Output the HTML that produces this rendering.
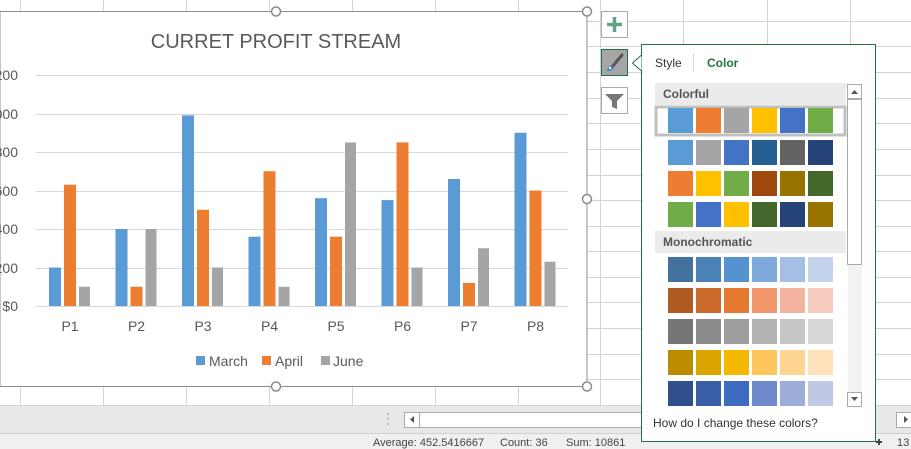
<!DOCTYPE html>
<html><head><meta charset="utf-8"><style>
body{margin:0;width:911px;height:449px;overflow:hidden;background:#fff;font-family:"Liberation Sans",sans-serif;position:relative}
.a{position:absolute}
.sw{position:absolute;width:25px;height:25px}
</style></head><body>
<svg class="a" style="left:0;top:0" width="911" height="449">
<g stroke="#d4d4d4" stroke-width="1">
<line x1="0" y1="21.5" x2="911" y2="21.5"/><line x1="0" y1="46.5" x2="911" y2="46.5"/><line x1="0" y1="72.5" x2="911" y2="72.5"/><line x1="0" y1="98.5" x2="911" y2="98.5"/><line x1="0" y1="123.5" x2="911" y2="123.5"/><line x1="0" y1="149.5" x2="911" y2="149.5"/><line x1="0" y1="175.5" x2="911" y2="175.5"/><line x1="0" y1="200.5" x2="911" y2="200.5"/><line x1="0" y1="226.5" x2="911" y2="226.5"/><line x1="0" y1="251.5" x2="911" y2="251.5"/><line x1="0" y1="277.5" x2="911" y2="277.5"/><line x1="0" y1="302.5" x2="911" y2="302.5"/><line x1="0" y1="328.5" x2="911" y2="328.5"/><line x1="0" y1="354.5" x2="911" y2="354.5"/><line x1="0" y1="379.5" x2="911" y2="379.5"/><line x1="0" y1="405.5" x2="911" y2="405.5"/>
<line x1="20.5" y1="0" x2="20.5" y2="405"/><line x1="103.5" y1="0" x2="103.5" y2="405"/><line x1="186.5" y1="0" x2="186.5" y2="405"/><line x1="269.5" y1="0" x2="269.5" y2="405"/><line x1="352.5" y1="0" x2="352.5" y2="405"/><line x1="435.5" y1="0" x2="435.5" y2="405"/><line x1="518.5" y1="0" x2="518.5" y2="405"/><line x1="600.5" y1="0" x2="600.5" y2="405"/><line x1="683.5" y1="0" x2="683.5" y2="405"/><line x1="767.5" y1="0" x2="767.5" y2="405"/><line x1="850.5" y1="0" x2="850.5" y2="405"/>
</g>
<rect x="0" y="11.5" width="587" height="375" fill="#fff" stroke="#8c8c8c"/>
<g fill="#fff" stroke="#8c8c8c" stroke-width="1.5"><circle cx="276" cy="11.5" r="4.5"/><circle cx="587" cy="11.5" r="4.5"/><circle cx="587" cy="199" r="4.5"/><circle cx="587" cy="386.5" r="4.5"/><circle cx="276" cy="386.5" r="4.5"/></g>
<g stroke="#d9d9d9"><line x1="36" y1="75.5" x2="568" y2="75.5"/><line x1="36" y1="114.5" x2="568" y2="114.5"/><line x1="36" y1="152.5" x2="568" y2="152.5"/><line x1="36" y1="191.5" x2="568" y2="191.5"/><line x1="36" y1="229.5" x2="568" y2="229.5"/><line x1="36" y1="268.5" x2="568" y2="268.5"/><line x1="36" y1="306.5" x2="568" y2="306.5"/></g>
<text x="276" y="48" font-size="20" fill="#595959" text-anchor="middle" font-family="Liberation Sans">CURRET PROFIT STREAM</text>
<g font-size="14" fill="#595959" text-anchor="end" font-family="Liberation Sans"><text x="18" y="80">200</text><text x="18" y="119">000</text><text x="18" y="157">800</text><text x="18" y="196">600</text><text x="18" y="234">400</text><text x="18" y="273">200</text><text x="18" y="311">$0</text></g>
<g font-size="14" fill="#595959" text-anchor="middle" font-family="Liberation Sans"><text x="70" y="331">P1</text><text x="136.5" y="331">P2</text><text x="203" y="331">P3</text><text x="269.5" y="331">P4</text><text x="336" y="331">P5</text><text x="402.5" y="331">P6</text><text x="469" y="331">P7</text><text x="535.5" y="331">P8</text></g>
<g fill="#5b9bd5"><rect x="49" y="267.5" width="12" height="38.5"/><rect x="115.5" y="229" width="12" height="77"/><rect x="182" y="115.4" width="12" height="190.6"/><rect x="248.5" y="236.7" width="12" height="69.3"/><rect x="315" y="198.2" width="12" height="107.8"/><rect x="381.5" y="200.1" width="12" height="105.9"/><rect x="448" y="179" width="12" height="127"/><rect x="514.5" y="132.75" width="12" height="173.25"/></g>
<g fill="#ed7d31"><rect x="64" y="184.7" width="12" height="121.3"/><rect x="130.5" y="286.75" width="12" height="19.25"/><rect x="197" y="209.75" width="12" height="96.25"/><rect x="263.5" y="171.25" width="12" height="134.75"/><rect x="330" y="236.7" width="12" height="69.3"/><rect x="396.5" y="142.4" width="12" height="163.6"/><rect x="463" y="282.9" width="12" height="23.1"/><rect x="529.5" y="190.5" width="12" height="115.5"/></g>
<g fill="#a5a5a5"><rect x="79" y="286.75" width="11" height="19.25"/><rect x="145.5" y="229" width="11" height="77"/><rect x="212" y="267.5" width="11" height="38.5"/><rect x="278.5" y="286.75" width="11" height="19.25"/><rect x="345" y="142.4" width="11" height="163.6"/><rect x="411.5" y="267.5" width="11" height="38.5"/><rect x="478" y="248.25" width="11" height="57.75"/><rect x="544.5" y="261.7" width="11" height="44.3"/></g>
<rect x="196" y="356" width="9" height="9" fill="#5b9bd5"/><rect x="262" y="356" width="9" height="9" fill="#ed7d31"/><rect x="321" y="356" width="9" height="9" fill="#a5a5a5"/>
<g font-size="14" fill="#595959" font-family="Liberation Sans"><text x="209" y="366">March</text><text x="275" y="366">April</text><text x="333" y="366">June</text></g>
<rect x="0" y="406" width="911" height="27" fill="#e8e8e8"/>
<rect x="0" y="433" width="911" height="16" fill="#f0f0f0"/><line x1="0" y1="433.5" x2="911" y2="433.5" stroke="#d0d0d0"/>
<g fill="#bbb"><rect x="387" y="413" width="2" height="2"/><rect x="387" y="418" width="2" height="2"/><rect x="387" y="423" width="2" height="2"/></g>
<rect x="404.5" y="412.5" width="240" height="15" fill="#fff" stroke="#aaa"/><line x1="419.5" y1="413" x2="419.5" y2="427" stroke="#aaa"/><path d="M414 416v7l-4-3.5z" fill="#555"/>
<rect x="896.5" y="412.5" width="15" height="15" fill="#fff" stroke="#aaa"/><path d="M904 416v7l4-3.5z" fill="#555"/>
<text x="373" y="446" font-size="11" fill="#444" font-family="Liberation Sans">Average: 452.5416667</text>
<text x="500" y="446" font-size="11" fill="#444" font-family="Liberation Sans">Count: 36</text>
<text x="566" y="446" font-size="11" fill="#444" font-family="Liberation Sans">Sum: 10861</text>
<text x="897" y="446" font-size="11" fill="#444" font-family="Liberation Sans">13</text>
<path d="M876 442h6M879 439v6" stroke="#444" stroke-width="2"/>
<!-- buttons -->
<rect x="601.5" y="11.5" width="26" height="26" fill="#fff" stroke="#aaa"/>
<path d="M614.5 17v15M607 24.5h15" stroke="#5ea383" stroke-width="3.5"/>
<rect x="601.5" y="49.5" width="26" height="26" fill="#a6a6a6" stroke="#217346"/>
<path d="M612 67l10-12" stroke="#555" stroke-width="3" stroke-linecap="round"/>
<path d="M607 71c1-5 4-6 6-5c1 2-1 5-6 5z" fill="#3d7fc4"/><circle cx="610" cy="68" r="1.2" fill="#fff"/>
<rect x="601.5" y="87.5" width="26" height="26" fill="#fff" stroke="#aaa"/>
<path d="M605 94h19l-7 7v8l-5-2v-6z" fill="#777"/>
<!-- panel -->
<rect x="641.5" y="44.5" width="234" height="397" fill="#fff" stroke="#217346"/>
<path d="M641.5 55l-9 8l9 8" fill="#fff" stroke="#217346"/><rect x="642" y="56" width="2" height="14" fill="#fff"/>
<text x="655" y="67" font-size="12" fill="#333" font-family="Liberation Sans">Style</text>
<line x1="693.5" y1="53" x2="693.5" y2="72" stroke="#ddd"/>
<text x="707" y="67" font-size="12" fill="#217346" font-weight="bold" font-family="Liberation Sans">Color</text>
<rect x="655" y="83" width="191" height="22" fill="#ebebeb"/>
<text x="663" y="98" font-size="12" fill="#555" font-weight="bold" font-family="Liberation Sans">Colorful</text>
<rect x="656" y="107" width="189" height="28" fill="#fff" stroke="#c0c0c0" stroke-width="3"/>
<rect x="655" y="231" width="191" height="22" fill="#ebebeb"/>
<text x="663" y="246" font-size="12" fill="#555" font-weight="bold" font-family="Liberation Sans">Monochromatic</text>
<rect x="848" y="84" width="14" height="321" fill="#f2f2f2"/>
<rect x="847.5" y="84.5" width="14" height="14" fill="#fff" stroke="#aaa"/><path d="M851 94h7l-3.5-4z" fill="#555"/>
<rect x="847.5" y="99.5" width="14" height="165" fill="#fff" stroke="#aaa"/>
<rect x="847.5" y="392.5" width="14" height="14" fill="#fff" stroke="#aaa"/><path d="M851 397h7l-3.5 4z" fill="#555"/>
<text x="653" y="427" font-size="12" fill="#333" font-family="Liberation Sans">How do I change these colors?</text>
</svg>
<div class="sw" style="left:668px;top:108px;background:#5b9bd5"></div><div class="sw" style="left:696px;top:108px;background:#ed7d31"></div><div class="sw" style="left:724px;top:108px;background:#a5a5a5"></div><div class="sw" style="left:752px;top:108px;background:#ffc000"></div><div class="sw" style="left:780px;top:108px;background:#4472c4"></div><div class="sw" style="left:808px;top:108px;background:#70ad47"></div>
<div class="sw" style="left:668px;top:140px;background:#5b9bd5"></div><div class="sw" style="left:696px;top:140px;background:#a5a5a5"></div><div class="sw" style="left:724px;top:140px;background:#4472c4"></div><div class="sw" style="left:752px;top:140px;background:#255e91"></div><div class="sw" style="left:780px;top:140px;background:#636363"></div><div class="sw" style="left:808px;top:140px;background:#264478"></div>
<div class="sw" style="left:668px;top:171px;background:#ed7d31"></div><div class="sw" style="left:696px;top:171px;background:#ffc000"></div><div class="sw" style="left:724px;top:171px;background:#70ad47"></div><div class="sw" style="left:752px;top:171px;background:#9e480e"></div><div class="sw" style="left:780px;top:171px;background:#997300"></div><div class="sw" style="left:808px;top:171px;background:#43682b"></div>
<div class="sw" style="left:668px;top:202px;background:#70ad47"></div><div class="sw" style="left:696px;top:202px;background:#4472c4"></div><div class="sw" style="left:724px;top:202px;background:#ffc000"></div><div class="sw" style="left:752px;top:202px;background:#43682b"></div><div class="sw" style="left:780px;top:202px;background:#264478"></div><div class="sw" style="left:808px;top:202px;background:#997300"></div>
<div class="sw" style="left:668px;top:257px;background:#41719c"></div><div class="sw" style="left:696px;top:257px;background:#4a82b7"></div><div class="sw" style="left:724px;top:257px;background:#5592cf"></div><div class="sw" style="left:752px;top:257px;background:#7eaadb"></div><div class="sw" style="left:780px;top:257px;background:#a3c0e4"></div><div class="sw" style="left:808px;top:257px;background:#c3d3ec"></div>
<div class="sw" style="left:668px;top:288px;background:#ae5a21"></div><div class="sw" style="left:696px;top:288px;background:#ca6a2b"></div><div class="sw" style="left:724px;top:288px;background:#e57930"></div><div class="sw" style="left:752px;top:288px;background:#f2966b"></div><div class="sw" style="left:780px;top:288px;background:#f4b39e"></div><div class="sw" style="left:808px;top:288px;background:#f6cbc0"></div>
<div class="sw" style="left:668px;top:319px;background:#767676"></div><div class="sw" style="left:696px;top:319px;background:#8b8b8b"></div><div class="sw" style="left:724px;top:319px;background:#9e9e9e"></div><div class="sw" style="left:752px;top:319px;background:#b2b2b2"></div><div class="sw" style="left:780px;top:319px;background:#c6c6c6"></div><div class="sw" style="left:808px;top:319px;background:#d8d8d8"></div>
<div class="sw" style="left:668px;top:350px;background:#bc8c00"></div><div class="sw" style="left:696px;top:350px;background:#dba500"></div><div class="sw" style="left:724px;top:350px;background:#f4b800"></div><div class="sw" style="left:752px;top:350px;background:#ffc75b"></div><div class="sw" style="left:780px;top:350px;background:#ffd594"></div><div class="sw" style="left:808px;top:350px;background:#ffe1bb"></div>
<div class="sw" style="left:668px;top:381px;background:#2f508b"></div><div class="sw" style="left:696px;top:381px;background:#375ea6"></div><div class="sw" style="left:724px;top:381px;background:#3e6bbf"></div><div class="sw" style="left:752px;top:381px;background:#6e89cb"></div><div class="sw" style="left:780px;top:381px;background:#9cadd7"></div><div class="sw" style="left:808px;top:381px;background:#bfc9e4"></div>
</body></html>
